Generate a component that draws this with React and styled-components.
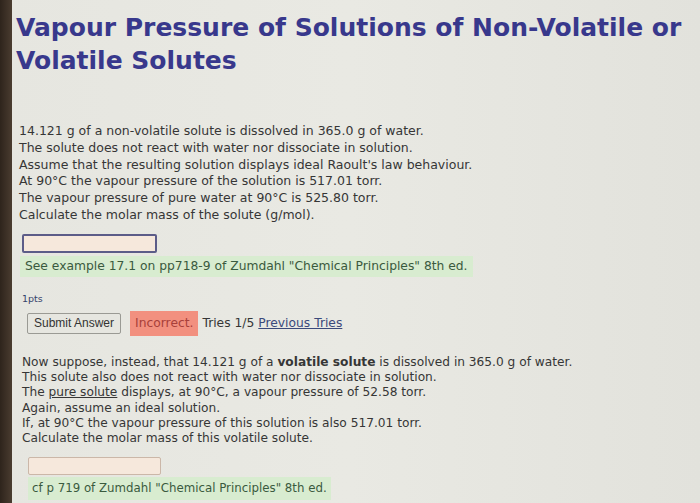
import styled, { createGlobalStyle } from "styled-components";

const GlobalStyle = createGlobalStyle`
  html, body {
    margin: 0;
    padding: 0;
    background: #e4e4de;
  }
  body {
    font-family: "DejaVu Sans", Verdana, sans-serif;
  }
`;

const Screen = styled.div`
  display: flex;
  width: 700px;
  height: 503px;
  overflow: hidden;
  background: linear-gradient(90deg, #e6e6e0 0%, #e9e9e3 50%, #e2e2dc 100%);
`;
const Bezel = styled.div`
  flex: 0 0 12px;
  background: linear-gradient(90deg, #2e241c, #4a3c30);
`;
const Content = styled.main`
  flex: 1;
  display: flex;
  flex-direction: column;
  padding: 11px 0 0 4px;
`;
const Title = styled.h1`
  margin: 0;
  font-family: "DejaVu Sans", Verdana, sans-serif;
  font-weight: bold;
  font-size: 25px;
  line-height: 33px;
  color: #38388c;
`;
const Question = styled.div`
  margin-top: ${(p) => p.$top}px;
  padding-left: ${(p) => p.$indent}px;
  font-size: ${(p) => p.$size}px;
  line-height: ${(p) => p.$lh}px;
  color: #363636;
`;
const Line = styled.div``;
const Answer = styled.div`
  width: ${(p) => (p.$strong ? 131 : 131)}px;
  height: ${(p) => (p.$strong ? 15 : 16)}px;
  margin: ${(p) => p.$margin};
  border: ${(p) => (p.$strong ? "2px solid #5c5c88" : "1px solid #cbb7a8")};
  border-radius: 2px;
  background: #f6e8dc;
`;
const Hint = styled.div`
  align-self: flex-start;
  margin: ${(p) => p.$margin};
  padding: ${(p) => p.$pad};
  background: #d8ecd0;
  color: #3a5a3e;
  font-size: ${(p) => p.$size}px;
  line-height: 16px;
`;
const Points = styled.div`
  margin: 16px 0 0 6px;
  font-size: 9.5px;
  color: #34446a;
`;
const SubmitRow = styled.div`
  display: flex;
  align-items: center;
  margin: 7px 0 0 11px;
  font-size: 12.3px;
  color: #363636;
`;
const SubmitButton = styled.button`
  height: 21px;
  padding: 0 6px;
  margin-right: 9px;
  border: 1px solid #9a9a94;
  border-radius: 2px;
  background: #e6e6e0;
  font-family: "Liberation Sans", Arial, sans-serif;
  font-size: 12px;
  color: #333;
`;
const Incorrect = styled.span`
  display: flex;
  align-items: center;
  height: 25px;
  padding: 0 5px;
  margin-right: 4px;
  background: #f2907f;
  color: #a8403a;
`;
const TriesLink = styled.span`
  margin-left: 4px;
  color: #3b4a7c;
  text-decoration: underline;
`;
const Under = styled.span`
  text-decoration: underline;
`;

export default function App() {
  return (
    <>
      <GlobalStyle />
      <Screen>
        <Bezel />
        <Content>
          <Title>
            Vapour Pressure of Solutions of Non-Volatile or
            <br />
            Volatile Solutes
          </Title>
          <Question $top={46} $indent={3} $size={12.5} $lh={16.8}>
            <Line>14.121 g of a non-volatile solute is dissolved in 365.0 g of water.</Line>
            <Line>The solute does not react with water nor dissociate in solution.</Line>
            <Line>Assume that the resulting solution displays ideal Raoult's law behaviour.</Line>
            <Line>At 90°C the vapour pressure of the solution is 517.01 torr.</Line>
            <Line>The vapour pressure of pure water at 90°C is 525.80 torr.</Line>
            <Line>Calculate the molar mass of the solute (g/mol).</Line>
          </Question>
          <Answer $strong $margin="10px 0 0 6px" />
          <Hint $margin="3px 0 0 4px" $pad="2px 5px 3px 5px" $size={12.3}>
            See example 17.1 on pp718-9 of Zumdahl "Chemical Principles" 8th ed.
          </Hint>
          <Points>1pts</Points>
          <SubmitRow>
            <SubmitButton>Submit Answer</SubmitButton>
            <Incorrect>Incorrect.</Incorrect>
            Tries 1/5
            <TriesLink>Previous Tries</TriesLink>
          </SubmitRow>
          <Question $top={19} $indent={6} $size={12.2} $lh={15.3}>
            <Line>
              Now suppose, instead, that 14.121 g of a <b>volatile solute</b> is dissolved in
              365.0 g of water.
            </Line>
            <Line>This solute also does not react with water nor dissociate in solution.</Line>
            <Line>
              The <Under>pure solute</Under> displays, at 90°C, a vapour pressure of 52.58 torr.
            </Line>
            <Line>Again, assume an ideal solution.</Line>
            <Line>If, at 90°C the vapour pressure of this solution is also 517.01 torr.</Line>
            <Line>Calculate the molar mass of this volatile solute.</Line>
          </Question>
          <Answer $margin="10px 0 0 12px" />
          <Hint $margin="2px 0 0 12px" $pad="3px 4px 4px 4px" $size={11.8}>
            cf p 719 of Zumdahl "Chemical Principles" 8th ed.
          </Hint>
        </Content>
      </Screen>
    </>
  );
}
